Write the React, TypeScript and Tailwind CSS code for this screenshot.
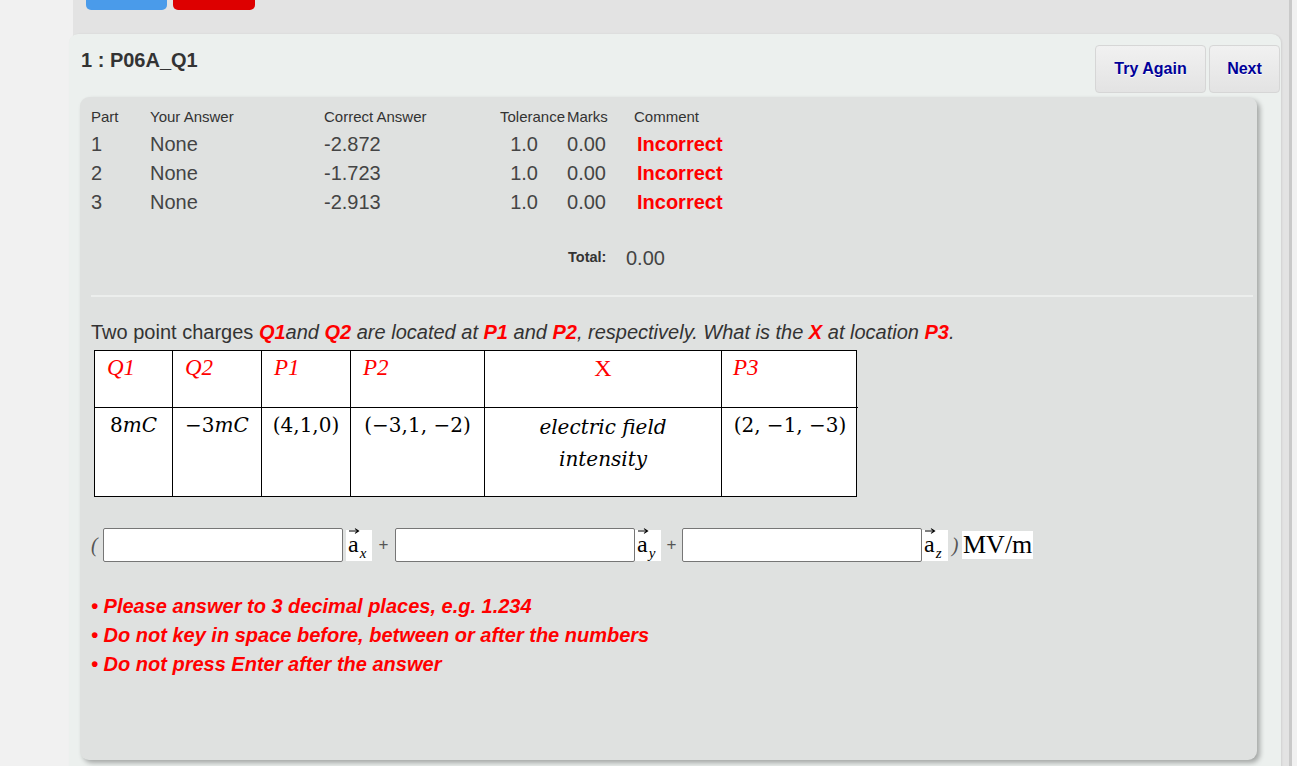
import React from "react";

const results = [
  { part: "1", answer: "None", correct: "-2.872", tol: "1.0", marks: "0.00" },
  { part: "2", answer: "None", correct: "-1.723", tol: "1.0", marks: "0.00" },
  { part: "3", answer: "None", correct: "-2.913", tol: "1.0", marks: "0.00" },
];

function Red({ children }: { children: React.ReactNode }) {
  return <span className="font-bold italic text-[#ff0000]">{children}</span>;
}

function UnitVector({ sub }: { sub: string }) {
  return (
    <span className="relative inline-flex h-[31px] w-[26px] items-end bg-white pl-[2px] pb-[5px] font-['Liberation_Serif',serif] text-[24px] leading-none text-black">
      <span className="relative">
        <svg
          className="absolute left-[1px] top-[-4px]"
          width="11"
          height="6"
          viewBox="0 0 11 6"
        >
          <path d="M0 3 H9 M6 0.6 L9.6 3 L6 5.4" stroke="#000" strokeWidth="1.1" fill="none" />
        </svg>
        a
      </span>
      <span className="ml-[1px] translate-y-[5px] text-[15px] italic">{sub}</span>
    </span>
  );
}

function AnswerBox() {
  return (
    <input
      type="text"
      className="h-[34px] w-[240px] rounded-[2px] border border-[#767676] bg-white px-1 outline-none"
    />
  );
}

export default function App() {
  return (
    <div className="h-[766px] overflow-hidden bg-[#f1f1f1] font-['Liberation_Sans',Arial,sans-serif]">
      <div className="ml-[73px] h-full w-[1219px] border-r-[3px] border-[#c9c9c9] bg-[#e3e3e3]">
        {/* cut-off buttons at the top */}
        <div className="flex h-[34px] gap-[6px] pl-[13px]">
          <div className="-mt-[30px] h-[40px] w-[81px] rounded-[5px] bg-[#4a9bea]" />
          <div className="-mt-[30px] h-[40px] w-[82px] rounded-[5px] bg-[#dd0000]" />
        </div>

        <div className="-ml-[4px] h-[760px] w-[1212px] rounded-t-[9px] bg-[#ecf0ee] shadow-[1px_0_2px_rgba(0,0,0,0.08)]">
          <div className="flex items-start justify-between pt-[11px] pr-px pl-[12px]">
            <h1 className="pt-[3px] text-[20px] font-bold leading-[24px] text-[#333]">1 : P06A_Q1</h1>
            <div className="flex gap-[3px]">
              <button className="h-[48px] w-[111px] rounded-[4px] border border-[#d6d6d6] bg-gradient-to-b from-[#f1f1f1] to-[#e3e3e3] text-[16px] font-bold text-[#000099] [text-shadow:0_1px_0_#fff]">
                Try Again
              </button>
              <button className="h-[48px] w-[71px] rounded-[4px] border border-[#d6d6d6] bg-gradient-to-b from-[#f1f1f1] to-[#e3e3e3] text-[16px] font-bold text-[#000099] [text-shadow:0_1px_0_#fff]">
                Next
              </button>
            </div>
          </div>

          <div className="mt-[4px] ml-[11px] h-[663px] w-[1177px] rounded-[9px] bg-[#dfe1e0] pt-[11px] pl-[11px] shadow-[3px_3px_5px_rgba(0,0,0,0.3)]">
            {/* results */}
            <div className="grid grid-cols-[59px_174px_176px_67px_67px_1fr] text-[15px] leading-[18px] whitespace-nowrap text-[#333]">
              <div>Part</div>
              <div>Your Answer</div>
              <div>Correct Answer</div>
              <div>Tolerance</div>
              <div>Marks</div>
              <div>Comment</div>
            </div>
            <div className="mt-[3px]">
              {results.map((r) => (
                <div
                  key={r.part}
                  className="grid h-[29px] grid-cols-[59px_174px_176px_67px_67px_1fr] items-center text-[20px] text-[#444]"
                >
                  <div>{r.part}</div>
                  <div>{r.answer}</div>
                  <div>{r.correct}</div>
                  <div className="pr-[29px] text-right">{r.tol}</div>
                  <div className="pr-[28px] text-right">{r.marks}</div>
                  <div className="pl-[3px] text-[20px] font-bold text-[#ff0000]">Incorrect</div>
                </div>
              ))}
            </div>
            <div className="mt-[30px] flex h-[24px] items-center pl-[477px]">
              <span className="w-[58px] text-[14.5px] font-bold text-[#333]">Total:</span>
              <span className="text-[20px] text-[#444]">0.00</span>
            </div>

            <div className="mt-[25px] mr-[4px] border-t-2 border-[#eceeed]" />

            {/* question */}
            <p className="mt-[24px] text-[20px] leading-[22px] text-[#333]">
              Two point charges <Red>Q1</Red>
              <i>and </i>
              <Red>Q2</Red>
              <i> are located at </i>
              <Red>P1</Red>
              <i> and </i>
              <Red>P2</Red>
              <i>, respectively. What is the </i>
              <Red>X</Red>
              <i> at location </i>
              <Red>P3</Red>
              <i>.</i>
            </p>

            <div className="mt-[7px] ml-[3px] grid w-[763px] grid-cols-[78px_89px_89px_134px_237px_136px] grid-rows-[57px_88px] border border-black bg-white text-black">
              {["Q1", "Q2", "P1", "P2"].map((h) => (
                <div
                  key={h}
                  className="border-r border-b border-black pt-[4px] pl-[12px] font-['Liberation_Serif',serif] text-[23px] italic leading-[26px] text-[#ff0000]"
                >
                  {h}
                </div>
              ))}
              <div className="border-r border-b border-black pt-[4px] text-center font-['Liberation_Serif',serif] text-[24px] leading-[26px] text-[#ff0000]">
                X
              </div>
              <div className="border-b border-black pt-[4px] pl-[11px] font-['Liberation_Serif',serif] text-[23px] italic leading-[26px] text-[#ff0000]">
                P3
              </div>

              <div className="border-r border-black pt-[3px] text-center font-['DejaVu_Serif',serif] text-[20px] leading-[28px]">
                8<i>mC</i>
              </div>
              <div className="border-r border-black pt-[3px] text-center font-['DejaVu_Serif',serif] text-[20px] leading-[28px]">
                −3<i>mC</i>
              </div>
              <div className="border-r border-black pt-[3px] text-center font-['DejaVu_Serif',serif] text-[20px] leading-[28px]">
                (4,1,0)
              </div>
              <div className="border-r border-black pt-[3px] text-center font-['DejaVu_Serif',serif] text-[20px] leading-[28px] whitespace-nowrap">
                (−3,1, −2)
              </div>
              <div className="border-r border-black pt-[3px] text-center font-['DejaVu_Serif',serif] text-[20px] italic leading-[32px]">
                electric field
                <br />
                intensity
              </div>
              <div className="pt-[3px] text-center font-['DejaVu_Serif',serif] text-[20px] leading-[28px] whitespace-nowrap">
                (2, −1, −3)
              </div>
            </div>

            {/* answer inputs */}
            <div className="mt-[31px] flex items-center text-[#555]">
              <span className="w-[12px] font-['Liberation_Serif',serif] text-[20px] italic">(</span>
              <AnswerBox />
              <span className="ml-[3px]">
                <UnitVector sub="x" />
              </span>
              <span className="w-[23px] text-center text-[17px]">+</span>
              <AnswerBox />
              <UnitVector sub="y" />
              <span className="w-[21px] text-center text-[17px]">+</span>
              <AnswerBox />
              <UnitVector sub="z" />
              <span className="w-[14px] text-center font-['Liberation_Serif',serif] text-[20px] italic">)</span>
              <span className="bg-white px-[1px] font-['Liberation_Serif',serif] text-[26px] leading-[28px] text-black">
                MV/m
              </span>
            </div>

            <ul className="mt-[30px] text-[20px] font-bold italic leading-[29px] text-[#ff0000]">
              <li>• Please answer to 3 decimal places, e.g. 1.234</li>
              <li>• Do not key in space before, between or after the numbers</li>
              <li>• Do not press Enter after the answer</li>
            </ul>
          </div>
        </div>
      </div>
    </div>
  );
}
